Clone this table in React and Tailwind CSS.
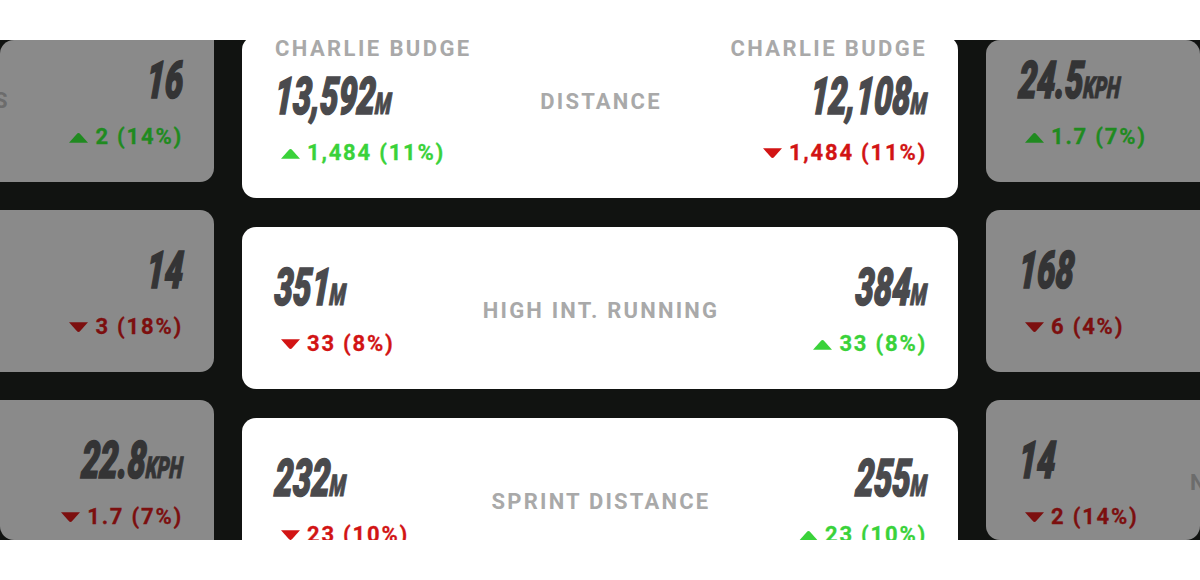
import React from "react";

const FONT = { fontFamily: "Roboto, 'Liberation Sans', sans-serif" };

function Tri({ up, color }) {
  return (
    <svg width="19" height="11" viewBox="0 0 18 10" className="shrink-0">
      {up ? (
        <path d="M0 10 L7.4 1.6 Q9 -0.2 10.6 1.6 L18 10 Z" fill={color} />
      ) : (
        <path d="M0 0 L7.4 8.4 Q9 10.2 10.6 8.4 L18 0 Z" fill={color} />
      )}
    </svg>
  );
}

function BigNum({ value, unit, right, dim }) {
  return (
    <span
      className={`inline-block font-black italic leading-none text-[52px] scale-x-[0.63] -skew-x-[6deg] whitespace-nowrap [-webkit-text-stroke:1.6px_currentColor] ${
        right ? "origin-right" : "origin-left"
      } ${dim ? "text-[#343435]" : "text-[#4a4a4d]"}`}
    >
      {value}
      <span className="text-[30px] [-webkit-text-stroke:1px_currentColor]">{unit}</span>
    </span>
  );
}

function Delta({ up, text, right, dim }) {
  const color = dim
    ? up
      ? "#208a20"
      : "#7c0f0f"
    : up
    ? "#3ad23a"
    : "#d21414";
  return (
    <div
      className={`flex items-center gap-[7px] mt-[17px] ${right ? "justify-end" : "pl-[6px]"}`}
    >
      <Tri up={up} color={color} />
      <span
        className="text-[22px] leading-[26px] font-bold tracking-[1.8px] whitespace-nowrap [-webkit-text-stroke:0.3px_currentColor]"
        style={{ color }}
      >
        {text}
      </span>
    </div>
  );
}

function Stat({ name, value, unit, up, delta, right, dim }) {
  return (
    <div className={`flex flex-col ${right ? "items-end" : "items-start"} ${name ? "" : "pt-[35px]"}`}>
      {name && (
        <div className="text-[22px] leading-[26px] font-bold tracking-[2.4px] text-[#a9a9a9] mb-[9px] whitespace-nowrap">
          {name}
        </div>
      )}
      <BigNum value={value} unit={unit} right={right} dim={dim} />
      <div className={`flex w-full ${right ? "justify-end" : "justify-start"}`}>
        <Delta up={up} text={delta} right={right} dim={dim} />
      </div>
    </div>
  );
}

function CenterCard({ label, left, right, labelUp }) {
  return (
    <div className="h-[162px] shrink-0 bg-white rounded-[14px] pl-[33px] pr-[31px] grid grid-cols-[1fr_auto_1fr] items-start">
      <Stat {...left} />
      <div
        className={`self-center text-[22px] leading-[26px] font-bold tracking-[2.2px] text-[#a9a9a9] whitespace-nowrap ${
          labelUp ? "mb-[30px]" : "mt-[5px]"
        }`}
      >
        {label}
      </div>
      <div className="flex justify-end">
        <Stat {...right} right />
      </div>
    </div>
  );
}

function LeftSide({ edge, stat }) {
  return (
    <div className="h-[162px] shrink-0 bg-[#8a8a8a] rounded-r-[14px] flex items-start overflow-hidden">
      <div className="w-[10px] shrink-0 self-center flex justify-end">
        {edge && (
          <span className="text-[22px] leading-[26px] font-bold tracking-[2.4px] text-[#6c6c6c] whitespace-nowrap">
            {edge}
          </span>
        )}
      </div>
      <div className="flex-1 flex justify-end pr-[31px]">
        <Stat {...stat} right dim />
      </div>
    </div>
  );
}

function RightSide({ edge, stat }) {
  return (
    <div className="h-[162px] shrink-0 bg-[#8a8a8a] rounded-l-[14px] flex items-start overflow-hidden">
      <div className="w-[204px] shrink-0 pl-[33px]">
        <Stat {...stat} dim />
      </div>
      <div className="self-center mt-[4px]">
        {edge && (
          <span className="text-[22px] leading-[26px] font-bold tracking-[2.4px] text-[#6c6c6c] whitespace-nowrap">
            {edge}
          </span>
        )}
      </div>
    </div>
  );
}

export default function App() {
  return (
    <div className="w-[1200px] h-[580px] bg-white pt-[40px]" style={FONT}>
      <div className="h-[500px] bg-[#111311] flex items-start gap-[28px] overflow-hidden">
        <div className="w-[214px] h-full shrink-0 overflow-hidden rounded-l-[14px]">
          <div className="flex flex-col gap-[28px] -mt-[20px]">
            <LeftSide
              edge="SPRINTS"
              stat={{ value: "16", unit: "", up: true, delta: "2 (14%)" }}
            />
            <LeftSide stat={{ value: "14", unit: "", up: false, delta: "3 (18%)" }} />
            <LeftSide stat={{ value: "22.8", unit: "KPH", up: false, delta: "1.7 (7%)" }} />
          </div>
        </div>

        <div className="w-[716px] shrink-0 flex flex-col gap-[29px] -mt-[4px]">
          <CenterCard
            label="DISTANCE"
            labelUp
            left={{ name: "CHARLIE BUDGE", value: "13,592", unit: "M", up: true, delta: "1,484 (11%)" }}
            right={{ name: "CHARLIE BUDGE", value: "12,108", unit: "M", up: false, delta: "1,484 (11%)" }}
          />
          <CenterCard
            label="HIGH INT. RUNNING"
            left={{ value: "351", unit: "M", up: false, delta: "33 (8%)" }}
            right={{ value: "384", unit: "M", up: true, delta: "33 (8%)" }}
          />
          <CenterCard
            label="SPRINT DISTANCE"
            left={{ value: "232", unit: "M", up: false, delta: "23 (10%)" }}
            right={{ value: "255", unit: "M", up: true, delta: "23 (10%)" }}
          />
        </div>

        <div className="w-[214px] h-full shrink-0 overflow-hidden rounded-[14px]">
          <div className="flex flex-col gap-[28px] -mt-[20px]">
            <RightSide stat={{ value: "24.5", unit: "KPH", up: true, delta: "1.7 (7%)" }} />
            <RightSide stat={{ value: "168", unit: "", up: false, delta: "6 (4%)" }} />
            <RightSide
              edge="NO. SPRINTS"
              stat={{ value: "14", unit: "", up: false, delta: "2 (14%)" }}
            />
          </div>
        </div>
      </div>
    </div>
  );
}
